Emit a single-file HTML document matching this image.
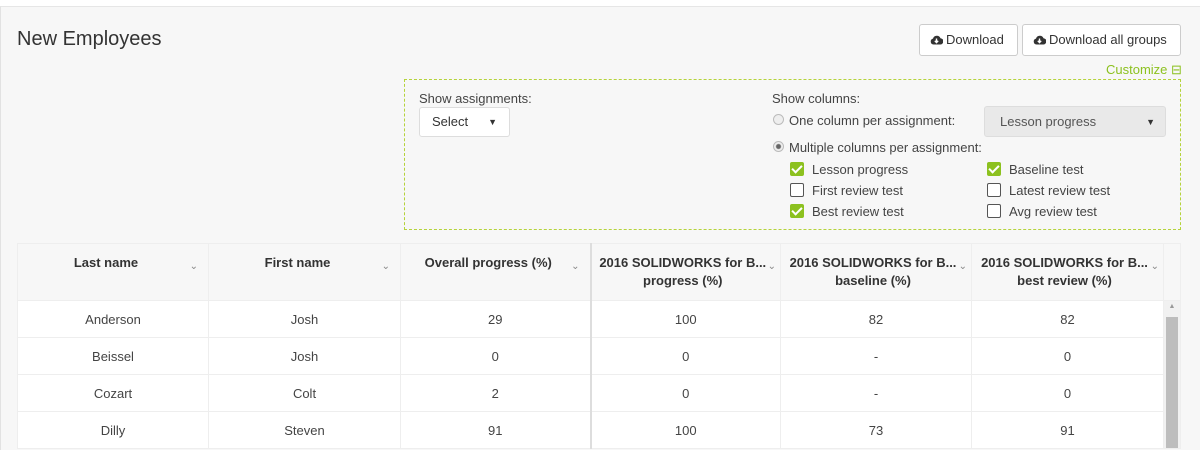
<!DOCTYPE html>
<html style="width:1200px;height:450px;overflow:hidden"><head><style>
*{box-sizing:border-box;margin:0;padding:0}
body{width:1200px;height:450px;overflow:hidden;background:#fff;font-family:"Liberation Sans",Arial,sans-serif;color:#333;position:relative}
.panel{position:absolute;left:0;top:6px;width:1200px;height:444px;background:#f7f7f7;border-top:1px solid #e6e6e6;border-left:1px solid #e2e2e2}
.a{position:absolute}
.btn{position:absolute;top:24px;height:32px;background:#fff;border:1px solid #ccc;border-radius:3px;font-size:13px;line-height:30px;padding-left:10px;color:#333}
.btn svg{vertical-align:-1px;margin-right:3px}
.cust{border:1px dashed #b5d33b;border-width:1.5px}
.lbl{font-size:13px;color:#444;position:absolute}
.cb{position:absolute;width:14px;height:14px;border:1.5px solid #555;border-radius:2px;background:#fff}
.cb.on{background:#8cc11f;border-color:#8cc11f}
.cb.on:after{content:"";position:absolute;left:3px;top:0px;width:4px;height:8px;border:solid #fff;border-width:0 2px 2px 0;transform:rotate(45deg)}
.rad{position:absolute;width:11px;height:11px;border-radius:50%;border:1px solid #bbb;background:#eee}
.wrap{position:absolute;left:17px;top:243px;width:1164px;height:207px;overflow:hidden}
table{border-collapse:collapse;background:#fff;table-layout:fixed}
td,th{border:1px solid #eee;text-align:center;font-size:13px;color:#444;height:37px;font-weight:normal}
th{background:#f7f7f7;height:57px;font-weight:bold;color:#333;vertical-align:top;padding-top:10px;font-size:13px;position:relative;line-height:18px;padding-right:14px}
th .c{position:absolute;right:10px;top:14px;font-weight:normal;color:#888;font-size:10px}
.fix{border-right:2px solid #ddd}
</style></head><body>
<div class="panel"></div>
<div class="a" style="left:17px;top:28px;font-size:20px;color:#333">New Employees</div>
<div class="btn" style="left:919px;width:99px"><svg width="13" height="11" viewBox="0 0 13 11"><path d="M3.5 10.5 A3 3 0 0 1 3 4.6 A4 4 0 0 1 10.5 4.2 A3.1 3.1 0 0 1 10 10.5 Z" fill="#333"/><path d="M6.5 4.5 V8.5 M4.8 6.8 L6.5 8.6 L8.2 6.8" stroke="#fff" stroke-width="1.4" fill="none"/></svg>Download</div>
<div class="btn" style="left:1022px;width:159px"><svg width="13" height="11" viewBox="0 0 13 11"><path d="M3.5 10.5 A3 3 0 0 1 3 4.6 A4 4 0 0 1 10.5 4.2 A3.1 3.1 0 0 1 10 10.5 Z" fill="#333"/><path d="M6.5 4.5 V8.5 M4.8 6.8 L6.5 8.6 L8.2 6.8" stroke="#fff" stroke-width="1.4" fill="none"/></svg>Download all groups</div>
<div class="a" style="left:1106px;top:62px;font-size:13px;color:#8cc11f">Customize ⊟</div>
<div class="a cust" style="left:404px;top:79px;width:777px;height:151px"></div>
<div class="lbl" style="left:419px;top:91px">Show assignments:</div>
<div class="a" style="left:419px;top:107px;width:91px;height:30px;background:#fff;border:1px solid #ddd;border-radius:3px;font-size:13px;line-height:28px;padding-left:12px">Select <span style="position:absolute;right:12px;font-size:9px;color:#333;top:0">▼</span></div>
<div class="lbl" style="left:772px;top:91px">Show columns:</div>
<div class="rad" style="left:773px;top:114px"></div>
<div class="lbl" style="left:789px;top:113px">One column per assignment:</div>
<div class="a" style="left:984px;top:106px;width:182px;height:31px;background:#e9e9e9;border:1px solid #ddd;border-radius:3px;font-size:13px;line-height:30px;padding-left:15px;color:#555">Lesson progress<span style="position:absolute;right:10px;font-size:9px;color:#333">▼</span></div>
<div class="rad" style="left:773px;top:141px;background:radial-gradient(circle,#666 2px,#eee 3px)"></div>
<div class="lbl" style="left:789px;top:140px">Multiple columns per assignment:</div>
<div class="cb on" style="left:790px;top:162px"></div><div class="lbl" style="left:812px;top:162px">Lesson progress</div>
<div class="cb" style="left:790px;top:183px"></div><div class="lbl" style="left:812px;top:183px">First review test</div>
<div class="cb on" style="left:790px;top:204px"></div><div class="lbl" style="left:812px;top:204px">Best review test</div>
<div class="cb on" style="left:987px;top:162px"></div><div class="lbl" style="left:1009px;top:162px">Baseline test</div>
<div class="cb" style="left:987px;top:183px"></div><div class="lbl" style="left:1009px;top:183px">Latest review test</div>
<div class="cb" style="left:987px;top:204px"></div><div class="lbl" style="left:1009px;top:204px">Avg review test</div>
<div class="wrap">
<table>
<colgroup><col style="width:191px"><col style="width:192px"><col style="width:190px"><col style="width:190px"><col style="width:191px"><col style="width:192px"><col style="width:17px"></colgroup>
<tr><th>Last name<span class="c">⌄</span></th><th>First name<span class="c">⌄</span></th><th class="fix">Overall progress (%)<span class="c">⌄</span></th><th style="padding-right:6px">2016 SOLIDWORKS for B...<br>progress (%)<span class="c" style="right:4px">⌄</span></th><th style="padding-right:6px">2016 SOLIDWORKS for B...<br>baseline (%)<span class="c" style="right:4px">⌄</span></th><th style="padding-right:6px">2016 SOLIDWORKS for B...<br>best review (%)<span class="c" style="right:4px">⌄</span></th><th style="background:#f7f7f7"></th></tr>
<tr><td>Anderson</td><td>Josh</td><td class="fix">29</td><td>100</td><td>82</td><td>82</td><td rowspan="4" style="background:#f1f1f1;padding:0;vertical-align:top;position:relative"><div style="font-size:7px;color:#999;margin-top:2px">▲</div><div style="position:absolute;left:2px;right:2px;top:16px;bottom:0;background:#bdbdbd"></div></td></tr>
<tr><td>Beissel</td><td>Josh</td><td class="fix">0</td><td>0</td><td>-</td><td>0</td></tr>
<tr><td>Cozart</td><td>Colt</td><td class="fix">2</td><td>0</td><td>-</td><td>0</td></tr>
<tr><td>Dilly</td><td>Steven</td><td class="fix">91</td><td>100</td><td>73</td><td>91</td></tr>
</table>
</div>
</body></html>
